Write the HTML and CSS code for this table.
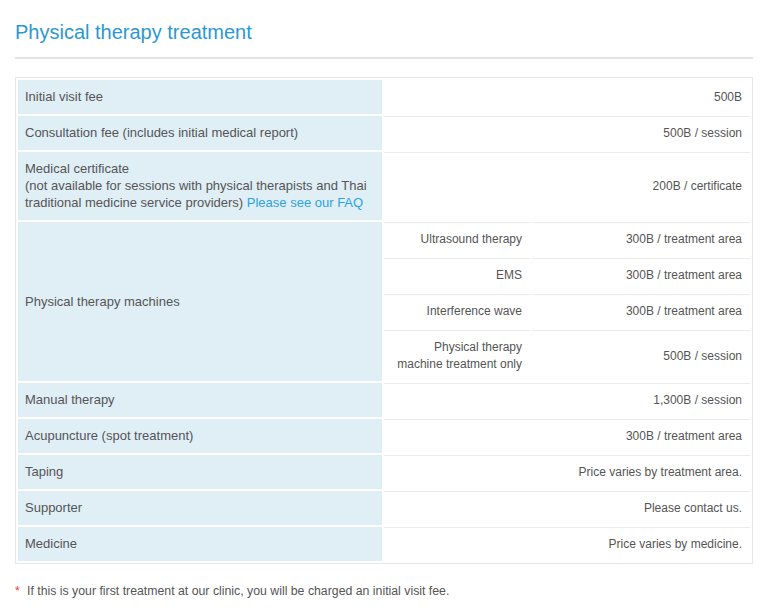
FILE: index.html
```html
<!DOCTYPE html>
<html lang="en">
<head>
<meta charset="utf-8">
<title>Physical therapy treatment</title>
<link rel="stylesheet" href="styles.css">
</head>
<body>
<div class="page">
  <h2 class="title">Physical therapy treatment</h2>
  <table class="price">
    <tr>
      <th>Initial visit fee</th>
      <td colspan="2">500B</td>
    </tr>
    <tr>
      <th>Consultation fee (includes initial medical report)</th>
      <td colspan="2">500B / session</td>
    </tr>
    <tr>
      <th>Medical certificate<br>(not available for sessions with physical therapists and Thai traditional medicine service providers) <a href="#" class="link">Please see our FAQ</a></th>
      <td colspan="2">200B / certificate</td>
    </tr>
    <tr>
      <th rowspan="4">Physical therapy machines</th>
      <td class="sub">Ultrasound therapy</td>
      <td>300B / treatment area</td>
    </tr>
    <tr>
      <td class="sub">EMS</td>
      <td>300B / treatment area</td>
    </tr>
    <tr>
      <td class="sub">Interference wave</td>
      <td>300B / treatment area</td>
    </tr>
    <tr>
      <td class="sub">Physical therapy<br>machine treatment only</td>
      <td>500B / session</td>
    </tr>
    <tr>
      <th>Manual therapy</th>
      <td colspan="2">1,300B / session</td>
    </tr>
    <tr>
      <th>Acupuncture (spot treatment)</th>
      <td colspan="2">300B / treatment area</td>
    </tr>
    <tr>
      <th>Taping</th>
      <td colspan="2">Price varies by treatment area.</td>
    </tr>
    <tr>
      <th>Supporter</th>
      <td colspan="2">Please contact us.</td>
    </tr>
    <tr>
      <th>Medicine</th>
      <td colspan="2">Price varies by medicine.</td>
    </tr>
  </table>
  <p class="note"><span class="mark">*</span>If this is your first treatment at our clinic, you will be charged an initial visit fee.</p>
</div>
</body>
</html>
```

FILE: styles.css
```css
html, body {
  margin: 0;
  padding: 0;
  background: #fff;
}
body {
  font-family: "Liberation Sans", Arial, sans-serif;
  color: #555;
  font-size: 12px;
}
.page {
  padding: 0 15px 0 15px;
}
.title {
  margin: 0;
  padding-top: 20px;
  padding-bottom: 13px;
  font-size: 20px;
  line-height: 24px;
  font-weight: normal;
  color: #2b98d4;
  border-bottom: 2px solid #e2e2e2;
}
.price {
  margin-top: 18px;
  width: 100%;
  border-collapse: separate;
  border-spacing: 2px;
  border: 1px solid #e6e6e6;
  padding: 0;
}
.price th,
.price td {
  font-weight: normal;
  line-height: 17px;
  padding: 8px 8px 8px 8px;
  vertical-align: middle;
  border-top: 1px solid #ebebeb;
}
.price th {
  text-align: left;
  width: 349px;
  padding: 7px 8px 9px 7px;
  font-size: 13px;
  background: #e0eef6;
  border-top-color: #e0eef6;
}
.price td {
  text-align: right;
  background: #fff;
}
.price tr:first-child td {
  border-top-color: #fff;
}
.price td.sub {
  width: 130px;
}
.link {
  color: #2ca3e3;
  text-decoration: none;
}
.note {
  margin: 19px 0 0 0;
  line-height: 17px;
  font-size: 12.3px;
  color: #555;
}
.mark {
  color: #e0443c;
  display: inline-block;
  width: 12px;
}
```
